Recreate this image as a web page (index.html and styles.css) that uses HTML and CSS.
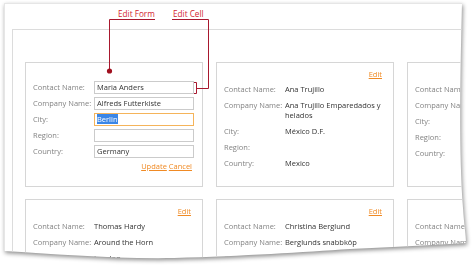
FILE: index.html
```html
<!DOCTYPE html>
<html>
<head>
    <link rel="stylesheet" href="styles.css">
</head>
<body>

    <div class="sheet">
        <div class="paper">
            <div class="panel">
                <div class="cards">

                    <!-- card in edit mode -->
                    <div class="card">
                        <div class="card_head"></div>
                        <div class="form">
                            <div class="label">Contact Name:</div>
                            <div class="editor">Maria Anders</div>
                            <div class="label">Company Name:</div>
                            <div class="editor">Alfreds Futterkiste</div>
                            <div class="label">City:</div>
                            <div class="editor focused"><span class="selected">Berlin</span></div>
                            <div class="label">Region:</div>
                            <div class="editor"></div>
                            <div class="label">Country:</div>
                            <div class="editor">Germany</div>
                        </div>
                        <div class="form_buttons">
                            <a href="#">Update</a> <a href="#">Cancel</a>
                        </div>
                    </div>

                    <div class="card">
                        <div class="card_head"><a href="#">Edit</a></div>
                        <div class="fields">
                            <div class="label">Contact Name:</div>
                            <div class="value">Ana Trujillo</div>
                            <div class="label">Company Name:</div>
                            <div class="value">Ana Trujillo Emparedados y helados</div>
                            <div class="label">City:</div>
                            <div class="value">México D.F.</div>
                            <div class="label">Region:</div>
                            <div class="value"></div>
                            <div class="label">Country:</div>
                            <div class="value">Mexico</div>
                        </div>
                    </div>

                    <div class="card">
                        <div class="card_head"><a href="#">Edit</a></div>
                        <div class="fields">
                            <div class="label">Contact Name:</div>
                            <div class="value">Antonio Moreno</div>
                            <div class="label">Company Name:</div>
                            <div class="value">Antonio Moreno</div>
                            <div class="label">City:</div>
                            <div class="value">México D.F.</div>
                            <div class="label">Region:</div>
                            <div class="value"></div>
                            <div class="label">Country:</div>
                            <div class="value">Mexico</div>
                        </div>
                    </div>

                    <div class="card">
                        <div class="card_head"><a href="#">Edit</a></div>
                        <div class="fields">
                            <div class="label">Contact Name:</div>
                            <div class="value">Thomas Hardy</div>
                            <div class="label">Company Name:</div>
                            <div class="value">Around the Horn</div>
                            <div class="label">City:</div>
                            <div class="value">London</div>
                        </div>
                    </div>

                    <div class="card">
                        <div class="card_head"><a href="#">Edit</a></div>
                        <div class="fields">
                            <div class="label">Contact Name:</div>
                            <div class="value">Christina Berglund</div>
                            <div class="label">Company Name:</div>
                            <div class="value">Berglunds snabbköp</div>
                            <div class="label">City:</div>
                            <div class="value">Luleå</div>
                        </div>
                    </div>

                    <div class="card">
                        <div class="card_head"><a href="#">Edit</a></div>
                        <div class="fields">
                            <div class="label">Contact Name:</div>
                            <div class="value">Hanna Moos</div>
                            <div class="label">Company Name:</div>
                            <div class="value">Blauer See</div>
                            <div class="label">City:</div>
                            <div class="value">Mannheim</div>
                        </div>
                    </div>

                </div>
            </div>
        </div>
    </div>

    <!-- callouts drawn over the screenshot -->
    <svg class="callouts" width="474" height="268" viewBox="0 0 474 268">
        <path d="M109.5,71 V19.5 H155" />
        <path d="M172,19.5 H208.5 V88.5 H196.5" />
        <path d="M194,82.5 H196.5 V93.5 H194" />
        <circle cx="109.5" cy="71" r="2.6" />
    </svg>
    <span class="note" id="note_form">Edit Form</span>
    <span class="note" id="note_cell">Edit Cell</span>

</body>
</html>
```

FILE: styles.css
```css
/*Page.*/
body {
    margin: 0;
    padding: 3px 0 0 4px;
    background-color: #ffffff;
    font-family: "Open Sans", "Noto Sans", sans-serif;
    font-size: 7.5px;
    color: #3a3a3a;
    overflow: hidden;
}

/*The curled sheet of paper.*/
.sheet {
    filter: drop-shadow(1px 2px 2px rgba(0,0,0,0.45));
}

.paper {
    width: 466px;
    height: 262px;
    box-sizing: border-box;
    padding: 25px 0 0 7px;
    background-color: #ffffff;
    border-top: 1px #e6e6e6 solid;
    border-left: 1px #e6e6e6 solid;
    overflow: hidden;
    clip-path: path("M0,0 H458 C456,80 455,150 459,205 C460,222 462,232 462,240 C430,242 390,244 346,246 C300,249 240,253 170,255 C110,256 50,251 0,248 Z");
}

/*Card view container.*/
.panel {
    width: 600px;
    height: 260px;
    border: 1px #dcdcdc solid;
    padding: 32px 0 0 12px;
}

.cards {
    display: grid;
    grid-template-columns: 178px 178px 178px;
    column-gap: 13px;
    row-gap: 12px;
}

.card {
    height: 125px;
    box-sizing: border-box;
    border: 1px #d6d6d6 solid;
    padding: 6px 8px 0 7px;
}

.card_head {
    height: 10px;
    line-height: 10px;
    margin-bottom: 2px;
    padding-right: 3px;
    text-align: right;
}

a {
    color: #f08a24;
}

/*Read only fields.*/
.fields {
    display: grid;
    grid-template-columns: 61px 1fr;
}

.fields div {
    padding: 3px 0;
    line-height: 10px;
    min-height: 10px;
}

.label {
    color: #838383;
    white-space: nowrap;
}

.value {
    color: #333333;
}

/*Edit form.*/
.form {
    display: grid;
    grid-template-columns: 61px 1fr;
    row-gap: 3px;
}

.form .label {
    line-height: 13px;
}

.editor {
    height: 13px;
    box-sizing: border-box;
    border: 1px #cbcbcb solid;
    padding-left: 2px;
    line-height: 11px;
    color: #333333;
}

.focused {
    border-color: #f5b45a;
}

.selected {
    background-color: #3b86e6;
    color: #ffffff;
}

.form_buttons {
    margin-top: 3px;
    line-height: 10px;
    padding-right: 2px;
    text-align: right;
}

/*Callouts.*/
.callouts {
    position: absolute;
    top: 0;
    left: 0;
}

.callouts path {
    fill: none;
    stroke: #a8182e;
    stroke-width: 1;
}

.callouts circle {
    fill: #a0101f;
}

.note {
    position: absolute;
    top: 9px;
    line-height: 10px;
    font-size: 8.2px;
    color: #d2232f;
}

#note_form {
    left: 118px;
}

#note_cell {
    left: 173px;
}
```
